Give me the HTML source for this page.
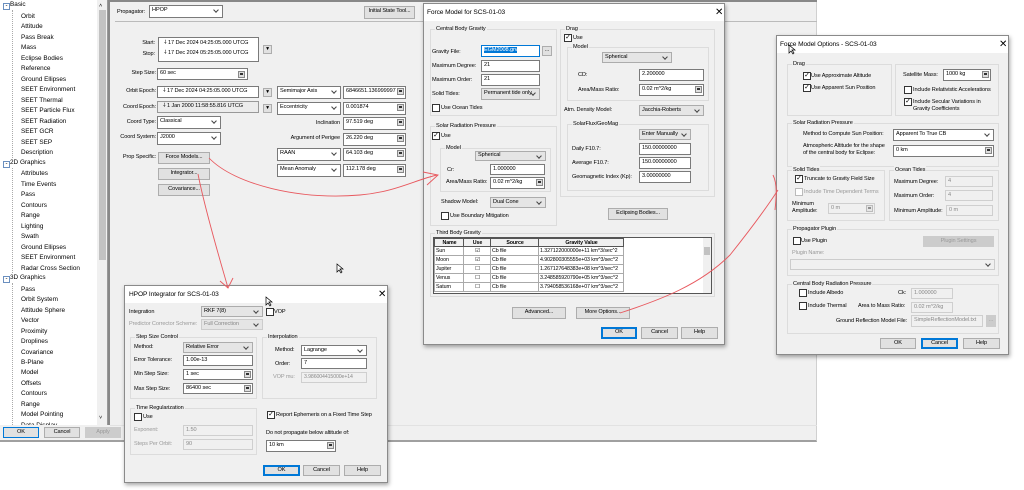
<!DOCTYPE html>
<html><head><meta charset="utf-8"><style>
*{box-sizing:border-box;margin:0;padding:0}
body{width:1024px;height:490px;background:#fff;position:relative;overflow:hidden;font-family:"Liberation Sans",sans-serif;font-size:5.6px;letter-spacing:-0.1px;color:#000}
div{position:absolute}
.t{white-space:nowrap;line-height:8px}
.r{text-align:right}
.g{color:#9a9a9a}
.i{background:#fff;border:1px solid #7a7a7a;padding-left:2px;white-space:nowrap;overflow:hidden;line-height:9px}
.d{background:#f0f0f0;border:1px solid #cfcfcf;color:#8a8a8a;padding-left:2px;white-space:nowrap;overflow:hidden;line-height:9px}
.c{background:#fff;border:1px solid #7a7a7a;padding-left:2px;white-space:nowrap;line-height:9px}
.c.gr{background:#e5e5e5;border-color:#acacac}
.c::after{content:"";position:absolute;right:4px;top:2px;width:3px;height:3px;border-right:1px solid #444;border-bottom:1px solid #444;transform:rotate(45deg)}
.b{background:#e1e1e1;border:1px solid #adadad;text-align:center;white-space:nowrap;line-height:9px}
.b.ok{border:1px solid #0078d7;box-shadow:inset 0 0 0 1px #0078d7}
.grp{border:1px solid #dcdcdc}
.grp>.h{top:-5px;left:4px;background:#f0f0f0;padding:0 1px;white-space:nowrap;line-height:8px}
.k{width:8px;height:8px;border:1px solid #333;background:#fff;font-size:7px;line-height:6px;text-align:center}
.k.gk{border-color:#bbb}
.sp{width:7px;height:7px;right:1px;top:1px;background:#ddd;border:1px solid #888}
.sp::after{content:"";position:absolute;left:1px;top:1px;width:3px;height:2px;background:#333}
.w{background:#f0f0f0;border:1px solid #8a8a8a;box-shadow:1px 2px 4px rgba(0,0,0,.35)}
.tb{left:0;right:0;top:0;height:17px;background:#fff}
.x{font-size:10px;line-height:10px}
.tree{font-size:6.4px;letter-spacing:0}
td{white-space:nowrap;overflow:hidden;padding-left:1px}
</style></head><body>

<!-- main window -->
<div style="left:0;top:0;width:817px;height:442px;background:#f0f0f0;border-bottom:2px solid #a0a0a0;border-right:1px solid #d0d0d0"></div>
<div style="left:110px;top:0;width:707px;height:2px;background:#888"></div>
<div style="left:0;top:0;width:108px;height:425px;background:#fff;border-right:1px solid #999"></div>
<div style="left:97px;top:0;width:10px;height:425px;background:#f0f0f0"></div>
<div style="left:99px;top:10px;width:7px;height:250px;background:#c2c2c2"></div>
<div class="t" style="left:99px;top:2px">˄</div>
<div class="t" style="left:99px;top:414px">˅</div>
<div style="left:108px;top:0;width:2px;height:425px;background:#888"></div>
<div style="left:110px;top:425px;width:707px;height:1px;background:#e2e2e2"></div>

<!-- tree -->
<div class="tree" style="left:0;top:0;width:97px;height:425px;overflow:hidden">
<div class="t" style="left:3px;top:1px"><span style="display:inline-block;width:7px;height:7px;border:1px solid #6a8fbf;vertical-align:-1px;font-size:6px;line-height:4px;text-align:center">-</span>Basic</div>
<div class="t" style="left:21px;top:12px;line-height:10.49px">Orbit<br>Attitude<br>Pass Break<br>Mass<br>Eclipse Bodies<br>Reference<br>Ground Ellipses<br>SEET Environment<br>SEET Thermal<br>SEET Particle Flux<br>SEET Radiation<br>SEET GCR<br>SEET SEP<br>Description<br><br>Attributes<br>Time Events<br>Pass<br>Contours<br>Range<br>Lighting<br>Swath<br>Ground Ellipses<br>SEET Environment<br>Radar Cross Section<br><br>Pass<br>Orbit System<br>Attitude Sphere<br>Vector<br>Proximity<br>Droplines<br>Covariance<br>B-Plane<br>Model<br>Offsets<br>Contours<br>Range<br>Model Pointing<br>Data Display</div>
<div class="t" style="left:3px;top:159px"><span style="display:inline-block;width:7px;height:7px;border:1px solid #6a8fbf;vertical-align:-1px;font-size:6px;line-height:4px;text-align:center">-</span>2D Graphics</div>
<div class="t" style="left:3px;top:274px"><span style="display:inline-block;width:7px;height:7px;border:1px solid #6a8fbf;vertical-align:-1px;font-size:6px;line-height:4px;text-align:center">-</span>3D Graphics</div>
<div style="left:12px;top:10px;width:0;height:150px;border-left:1px dotted #aaa"></div>
<div style="left:12px;top:168px;width:0;height:105px;border-left:1px dotted #aaa"></div>
<div style="left:12px;top:283px;width:0;height:142px;border-left:1px dotted #aaa"></div>
</div>
<div class="b" style="left:3px;top:427px;width:36px;height:11px;border-color:#0078d7">OK</div>
<div class="b" style="left:44px;top:427px;width:36px;height:11px">Cancel</div>
<div class="b g" style="left:85px;top:427px;width:36px;height:11px;background:#ccc;border-color:#ccc">Apply</div>

<!-- main pane -->
<div class="t" style="left:117px;top:8px">Propagator:</div>
<div class="c" style="left:149px;top:5px;width:74px;height:13px">HPOP</div>
<div class="b" style="left:364px;top:6px;width:51px;height:13px">Initial State Tool...</div>
<div style="left:115px;top:21px;width:702px;height:1px;background:#bbb"></div>

<div class="t r" style="left:120px;top:39px;width:35px">Start:</div>
<div class="t r" style="left:120px;top:50px;width:35px">Stop:</div>
<div class="i" style="left:158px;top:37px;width:101px;height:25px;line-height:10px;padding-left:5px">⸸ 17 Dec 2024 04:25:05.000 UTCG<br>⸸ 17 Dec 2024 05:25:05.000 UTCG</div>
<div class="b" style="left:263px;top:45px;width:9px;height:9px;font-size:5px;line-height:7px">▼</div>
<div class="t r" style="left:110px;top:69px;width:46px">Step Size:</div>
<div class="i" style="left:157px;top:68px;width:91px;height:12px">60 sec<div class="sp" style="top:2px;right:2px"></div></div>
<div class="t r" style="left:110px;top:87px;width:46px">Orbit Epoch:</div>
<div class="i" style="left:157px;top:86px;width:102px;height:12px;padding-left:5px">⸸ 17 Dec 2024 04:25:05.000 UTCG</div>
<div class="b" style="left:263px;top:88px;width:9px;height:9px;font-size:5px;line-height:7px">▼</div>
<div class="t r" style="left:110px;top:103px;width:46px">Coord Epoch:</div>
<div class="d" style="left:157px;top:101px;width:102px;height:12px;color:#000;background:#ececec;border-color:#999;padding-left:5px">⸸ 1 Jan 2000 11:58:55.816 UTCG</div>
<div class="b" style="left:263px;top:104px;width:9px;height:9px;font-size:5px;line-height:7px">▼</div>
<div class="t r" style="left:110px;top:118px;width:46px">Coord Type:</div>
<div class="c" style="left:157px;top:116px;width:64px;height:13px">Classical</div>
<div class="t r" style="left:110px;top:133px;width:46px">Coord System:</div>
<div class="c" style="left:157px;top:132px;width:64px;height:13px">J2000</div>
<div class="t r" style="left:110px;top:153px;width:46px">Prop Specific:</div>
<div class="b" style="left:158px;top:152px;width:52px;height:12px">Force Models...</div>
<div class="b" style="left:158px;top:168px;width:52px;height:12px">Integrator...</div>
<div class="b" style="left:158px;top:184px;width:52px;height:12px">Covariance...</div>

<div class="c" style="left:277px;top:86px;width:64px;height:13px">Semimajor Axis</div>
<div class="i" style="left:343px;top:86px;width:63px;height:13px">6846651.136999997<div class="sp"></div></div>
<div class="c" style="left:277px;top:102px;width:64px;height:13px">Eccentricity</div>
<div class="i" style="left:343px;top:102px;width:63px;height:13px">0.001874<div class="sp"></div></div>
<div class="t r" style="left:270px;top:119px;width:70px">Inclination</div>
<div class="i" style="left:343px;top:117px;width:63px;height:13px">97.519 deg<div class="sp"></div></div>
<div class="t r" style="left:270px;top:134px;width:70px">Argument of Perigee</div>
<div class="i" style="left:343px;top:133px;width:63px;height:13px">26.220 deg<div class="sp"></div></div>
<div class="c" style="left:277px;top:148px;width:64px;height:13px">RAAN</div>
<div class="i" style="left:343px;top:148px;width:63px;height:13px">64.103 deg<div class="sp"></div></div>
<div class="c" style="left:277px;top:164px;width:64px;height:13px">Mean Anomaly</div>
<div class="i" style="left:343px;top:164px;width:63px;height:13px">112.178 deg<div class="sp"></div></div>

<!-- Force Model dialog -->
<div class="w" style="left:423px;top:3px;width:302px;height:342px">
<div class="tb"></div>
<div class="t" style="left:3px;top:5px;font-size:6.6px">Force Model for SCS-01-03</div>
<div class="t x" style="left:291px;top:4px">✕</div>
</div>
<div class="grp" style="left:430px;top:29px;width:127px;height:87px"><div class="t h">Central Body Gravity</div></div>
<div class="t" style="left:432px;top:48px">Gravity File:</div>
<div class="i" style="left:481px;top:45px;width:59px;height:12px;border-color:#0078d7"><span style="background:#0078d7;color:#fff">EGM2008.grv</span></div>
<div class="b" style="left:542px;top:46px;width:10px;height:10px;line-height:6px">...</div>
<div class="t" style="left:432px;top:62px">Maximum Degree:</div>
<div class="i" style="left:481px;top:60px;width:59px;height:12px">21</div>
<div class="t" style="left:432px;top:76px">Maximum Order:</div>
<div class="i" style="left:481px;top:74px;width:59px;height:12px">21</div>
<div class="t" style="left:432px;top:90px">Solid Tides:</div>
<div class="c gr" style="left:481px;top:88px;width:59px;height:12px">Permanent tide only</div>
<div class="k" style="left:432px;top:104px"></div><div class="t" style="left:441px;top:104px">Use Ocean Tides</div>

<div class="grp" style="left:430px;top:126px;width:127px;height:100px"><div class="t h">Solar Radiation Pressure</div></div>
<div class="k" style="left:432px;top:132px">✓</div><div class="t" style="left:441px;top:132px">Use</div>
<div class="grp" style="left:440px;top:148px;width:111px;height:44px"><div class="t h">Model</div></div>
<div class="c gr" style="left:475px;top:151px;width:71px;height:10px;line-height:7px">Spherical</div>
<div class="t" style="left:447px;top:166px">Cr:</div>
<div class="i" style="left:490px;top:164px;width:55px;height:11px">1.000000</div>
<div class="t" style="left:446px;top:178px">Area/Mass Ratio:</div>
<div class="i" style="left:490px;top:177px;width:55px;height:12px">0.02 m^2/kg<div class="sp"></div></div>
<div class="t" style="left:441px;top:198px">Shadow Model:</div>
<div class="c gr" style="left:490px;top:197px;width:56px;height:11px;line-height:8px">Dual Cone</div>
<div class="k" style="left:441px;top:212px"></div><div class="t" style="left:450px;top:212px">Use Boundary Mitigation</div>

<div class="grp" style="left:560px;top:29px;width:155px;height:168px"><div class="t h">Drag</div></div>
<div class="k" style="left:564px;top:34px">✓</div><div class="t" style="left:573px;top:34px">Use</div>
<div class="grp" style="left:567px;top:47px;width:142px;height:54px"><div class="t h">Model</div></div>
<div class="c gr" style="left:602px;top:52px;width:70px;height:11px;line-height:8px">Spherical</div>
<div class="t" style="left:578px;top:71px">CD:</div>
<div class="i" style="left:639px;top:69px;width:65px;height:12px">2.200000</div>
<div class="t" style="left:578px;top:86px">Area/Mass Ratio:</div>
<div class="i" style="left:639px;top:84px;width:65px;height:12px">0.02 m^2/kg<div class="sp"></div></div>
<div class="t" style="left:564px;top:106px">Atm. Density Model:</div>
<div class="c gr" style="left:639px;top:105px;width:65px;height:11px;line-height:8px">Jacchia-Roberts</div>
<div class="grp" style="left:567px;top:124px;width:142px;height:67px"><div class="t h">SolarFlux/GeoMag</div></div>
<div class="c gr" style="left:639px;top:129px;width:52px;height:11px;line-height:8px">Enter Manually</div>
<div class="t" style="left:572px;top:145px">Daily F10.7:</div>
<div class="i" style="left:639px;top:143px;width:52px;height:12px">150.00000000</div>
<div class="t" style="left:572px;top:159px">Average F10.7:</div>
<div class="i" style="left:639px;top:157px;width:52px;height:12px">150.00000000</div>
<div class="t" style="left:572px;top:173px">Geomagnetic Index (Kp):</div>
<div class="i" style="left:639px;top:171px;width:52px;height:12px">3.00000000</div>
<div class="b" style="left:608px;top:208px;width:60px;height:12px">Eclipsing Bodies...</div>

<div class="grp" style="left:430px;top:233px;width:285px;height:64px"><div class="t h">Third Body Gravity</div></div>
<div style="left:433px;top:237px;width:279px;height:57px;background:#fff;border:1px solid #555;overflow:hidden">
<table style="border-collapse:collapse;font-size:5.3px;position:absolute;left:0;top:0;table-layout:fixed;width:189px">
<tr style="height:8px;font-weight:bold;background:#f0f0f0"><td style="width:29px;border:1px solid #555;text-align:center">Name</td><td style="width:27px;border:1px solid #555;text-align:center">Use</td><td style="width:48px;border:1px solid #555;text-align:center">Source</td><td style="width:85px;border:1px solid #555;text-align:center">Gravity Value</td></tr>
<tr style="height:9px"><td style="border:1px solid #aaa">Sun</td><td style="border:1px solid #aaa;text-align:center">☑</td><td style="border:1px solid #aaa">Cb file</td><td style="border:1px solid #aaa">1.327122000000e+11 km^3/sec^2</td></tr>
<tr style="height:9px"><td style="border:1px solid #aaa">Moon</td><td style="border:1px solid #aaa;text-align:center">☑</td><td style="border:1px solid #aaa">Cb file</td><td style="border:1px solid #aaa">4.902800305555e+03 km^3/sec^2</td></tr>
<tr style="height:9px"><td style="border:1px solid #aaa">Jupiter</td><td style="border:1px solid #aaa;text-align:center">☐</td><td style="border:1px solid #aaa">Cb file</td><td style="border:1px solid #aaa">1.267127648383e+08 km^3/sec^2</td></tr>
<tr style="height:9px"><td style="border:1px solid #aaa">Venus</td><td style="border:1px solid #aaa;text-align:center">☐</td><td style="border:1px solid #aaa">Cb file</td><td style="border:1px solid #aaa">3.248585920790e+05 km^3/sec^2</td></tr>
<tr style="height:9px"><td style="border:1px solid #aaa">Saturn</td><td style="border:1px solid #aaa;text-align:center">☐</td><td style="border:1px solid #aaa">Cb file</td><td style="border:1px solid #aaa">3.794058536168e+07 km^3/sec^2</td></tr>
</table>
<div style="right:0;top:0;width:8px;height:55px;background:#f0f0f0"></div>
<div style="right:1px;top:9px;width:6px;height:8px;background:#c2c2c2"></div>
</div>
<div class="b" style="left:512px;top:307px;width:54px;height:12px">Advanced...</div>
<div class="b" style="left:576px;top:307px;width:54px;height:12px">More Options...</div>
<div class="b ok" style="left:601px;top:327px;width:36px;height:12px">OK</div>
<div class="b" style="left:641px;top:327px;width:37px;height:12px">Cancel</div>
<div class="b" style="left:681px;top:327px;width:37px;height:12px">Help</div>

<!-- Force Model Options -->
<div class="w" style="left:776px;top:35px;width:233px;height:320px">
<div class="tb"></div>
<div class="t" style="left:3px;top:5px;font-size:6.6px">Force Model Options - SCS-01-03</div>
<div class="t x" style="left:222px;top:4px">✕</div>
</div>
<div class="grp" style="left:787px;top:64px;width:105px;height:52px"><div class="t h">Drag</div></div>
<div class="k" style="left:803px;top:72px">✓</div><div class="t" style="left:811px;top:72px">Use Approximate Altitude</div>
<div class="k" style="left:803px;top:84px">✓</div><div class="t" style="left:811px;top:84px">Use Apparent Sun Position</div>
<div class="grp" style="left:895px;top:64px;width:104px;height:52px"></div>
<div class="t" style="left:903px;top:71px">Satellite Mass:</div>
<div class="i" style="left:943px;top:69px;width:48px;height:12px">1000 kg<div class="sp"></div></div>
<div class="k" style="left:904px;top:86px"></div><div class="t" style="left:913px;top:86px">Include Relativistic Accelerations</div>
<div class="k" style="left:904px;top:98px">✓</div><div class="t" style="left:913px;top:98px">Include Secular Variations in</div>
<div class="t" style="left:913px;top:105px">Gravity Coefficients</div>
<div class="grp" style="left:787px;top:123px;width:212px;height:44px"><div class="t h">Solar Radiation Pressure</div></div>
<div class="t" style="left:803px;top:130px">Method to Compute Sun Position:</div>
<div class="c" style="left:893px;top:129px;width:101px;height:12px">Apparent To True CB</div>
<div class="t" style="left:803px;top:142px">Atmospheric Altitude for the shape</div>
<div class="t" style="left:803px;top:149px">of the central body for Eclipse:</div>
<div class="i" style="left:893px;top:145px;width:101px;height:12px">0 km<div class="sp"></div></div>
<div class="grp" style="left:787px;top:170px;width:98px;height:51px"><div class="t h">Solid Tides</div></div>
<div class="k" style="left:795px;top:175px">✓</div><div class="t" style="left:804px;top:175px">Truncate to Gravity Field Size</div>
<div class="k gk" style="left:795px;top:188px"></div><div class="t g" style="left:804px;top:188px">Include Time Dependent Terms</div>
<div class="t" style="left:792px;top:200px">Minimum</div><div class="t" style="left:792px;top:207px">Amplitude:</div>
<div class="d" style="left:828px;top:203px;width:47px;height:11px">0 m<div class="sp" style="opacity:.5"></div></div>
<div class="grp" style="left:889px;top:170px;width:110px;height:51px"><div class="t h">Ocean Tides</div></div>
<div class="t" style="left:894px;top:178px">Maximum Degree:</div>
<div class="d" style="left:945px;top:176px;width:48px;height:11px">4</div>
<div class="t" style="left:894px;top:192px">Maximum Order:</div>
<div class="d" style="left:945px;top:190px;width:48px;height:11px">4</div>
<div class="t" style="left:894px;top:207px">Minimum Amplitude:</div>
<div class="d" style="left:946px;top:205px;width:47px;height:11px">0 m</div>
<div class="grp" style="left:787px;top:229px;width:212px;height:47px"><div class="t h">Propagator Plugin</div></div>
<div class="k" style="left:793px;top:237px"></div><div class="t" style="left:801px;top:237px">Use Plugin</div>
<div class="b g" style="left:923px;top:236px;width:71px;height:11px;background:#ccc;border-color:#ccc">Plugin Settings</div>
<div class="t g" style="left:792px;top:249px">Plugin Name:</div>
<div class="c gr" style="left:790px;top:259px;width:205px;height:11px;background:#f0f0f0;border-color:#ccc"></div>
<div class="grp" style="left:787px;top:284px;width:212px;height:50px"><div class="t h">Central Body Radiation Pressure</div></div>
<div class="k" style="left:799px;top:289px"></div><div class="t" style="left:808px;top:289px">Include Albedo</div>
<div class="t" style="left:898px;top:289px">Ck:</div>
<div class="d" style="left:911px;top:288px;width:42px;height:11px">1.000000</div>
<div class="k" style="left:799px;top:302px"></div><div class="t" style="left:808px;top:302px">Include Thermal</div>
<div class="t" style="left:858px;top:302px">Area to Mass Ratio:</div>
<div class="d" style="left:911px;top:302px;width:42px;height:11px">0.02 m^2/kg</div>
<div class="t" style="left:836px;top:317px">Ground Reflection Model File:</div>
<div class="d" style="left:911px;top:315px;width:72px;height:12px">SimpleReflectionModel.txt</div>
<div class="b g" style="left:986px;top:315px;width:10px;height:12px;background:#ccc;border-color:#ccc">...</div>
<div class="b" style="left:880px;top:338px;width:36px;height:11px">OK</div>
<div class="b ok" style="left:921px;top:338px;width:37px;height:11px">Cancel</div>
<div class="b" style="left:963px;top:338px;width:37px;height:11px">Help</div>

<!-- HPOP Integrator -->
<div class="w" style="left:124px;top:285px;width:264px;height:198px">
<div class="tb"></div>
<div class="t" style="left:4px;top:5px;font-size:6.6px">HPOP Integrator for SCS-01-03</div>
<div class="t x" style="left:253px;top:4px">✕</div>
</div>
<div class="t" style="left:129px;top:308px">Integration</div>
<div class="c gr" style="left:201px;top:306px;width:62px;height:11px;line-height:8px">RKF 7(8)</div>
<div class="k" style="left:266px;top:308px"></div><div class="t" style="left:274px;top:308px">VOP</div>
<div class="t g" style="left:129px;top:320px">Predictor Corrector Scheme:</div>
<div class="c gr" style="left:201px;top:319px;width:62px;height:11px;line-height:8px;color:#888;border-color:#ccc">Full Correction</div>
<div class="grp" style="left:130px;top:337px;width:127px;height:62px"><div class="t h">Step Size Control</div></div>
<div class="t" style="left:134px;top:343px">Method:</div>
<div class="c gr" style="left:183px;top:342px;width:70px;height:11px;line-height:8px">Relative Error</div>
<div class="t" style="left:134px;top:356px">Error Tolerance:</div>
<div class="i" style="left:183px;top:355px;width:70px;height:11px;line-height:8px">1.00e-13</div>
<div class="t" style="left:134px;top:370px">Min Step Size:</div>
<div class="i" style="left:183px;top:369px;width:70px;height:11px;line-height:8px">1 sec<div class="sp" style="top:1px"></div></div>
<div class="t" style="left:134px;top:385px">Max Step Size:</div>
<div class="i" style="left:183px;top:383px;width:70px;height:11px;line-height:8px">86400 sec<div class="sp" style="top:1px"></div></div>
<div class="grp" style="left:262px;top:337px;width:115px;height:62px"><div class="t h">Interpolation</div></div>
<div class="t" style="left:275px;top:346px">Method:</div>
<div class="c" style="left:301px;top:345px;width:66px;height:11px;line-height:8px">Lagrange</div>
<div class="t" style="left:275px;top:360px">Order:</div>
<div class="i" style="left:301px;top:358px;width:66px;height:11px;line-height:8px">7</div>
<div class="t g" style="left:273px;top:373px">VOP mu:</div>
<div class="d" style="left:301px;top:372px;width:66px;height:11px;line-height:8px;font-size:5.2px">3.986004415000e+14</div>
<div class="grp" style="left:130px;top:408px;width:127px;height:47px"><div class="t h">Time Regularization</div></div>
<div class="k" style="left:134px;top:413px"></div><div class="t" style="left:143px;top:413px">Use</div>
<div class="t g" style="left:134px;top:426px">Exponent:</div>
<div class="d" style="left:183px;top:425px;width:70px;height:11px;line-height:8px">1.50</div>
<div class="t g" style="left:134px;top:440px">Steps Per Orbit:</div>
<div class="d" style="left:183px;top:439px;width:70px;height:11px;line-height:8px">90</div>
<div class="k" style="left:267px;top:411px">✓</div><div class="t" style="left:276px;top:411px">Report Ephemeris on a Fixed Time Step</div>
<div class="t" style="left:266px;top:429px">Do not propagate below altitude of:</div>
<div class="i" style="left:266px;top:440px;width:70px;height:12px">10 km<div class="sp"></div></div>
<div class="b ok" style="left:263px;top:465px;width:37px;height:11px;line-height:8px">OK</div>
<div class="b" style="left:303px;top:465px;width:37px;height:11px;line-height:8px">Cancel</div>
<div class="b" style="left:344px;top:465px;width:37px;height:11px;line-height:8px">Help</div>

<!-- red annotations -->
<svg style="position:absolute;left:0;top:0" width="1024" height="490" fill="none" stroke="#e8585e" stroke-width="0.9">
<path d="M209 158 C235 185 300 200 360 195 C395 192 415 180 437 175"/>
<path d="M423 172 L438 175 L427 185"/>
<path d="M198 174 C205 210 220 260 228 288"/>
<path d="M220 281 L228 288 L233 278"/>
<path d="M620 313 C660 300 700 285 730 255 C750 230 765 210 778 190"/>
<path d="M773 175 C778 185 776 200 775 210"/>
</svg>
<!-- cursors -->
<svg style="position:absolute;left:336px;top:263px" width="8" height="11"><path d="M1 1 L1 9 L3 7 L5 10 L6 9 L4 6 L7 6 Z" fill="#fff" stroke="#000" stroke-width=".7"/></svg>
<svg style="position:absolute;left:265px;top:296px" width="8" height="11"><path d="M1 1 L1 9 L3 7 L5 10 L6 9 L4 6 L7 6 Z" fill="#fff" stroke="#000" stroke-width=".7"/></svg>
<svg style="position:absolute;left:788px;top:44px" width="8" height="11"><path d="M1 1 L1 9 L3 7 L5 10 L6 9 L4 6 L7 6 Z" fill="#fff" stroke="#000" stroke-width=".7"/></svg>
</body></html>
